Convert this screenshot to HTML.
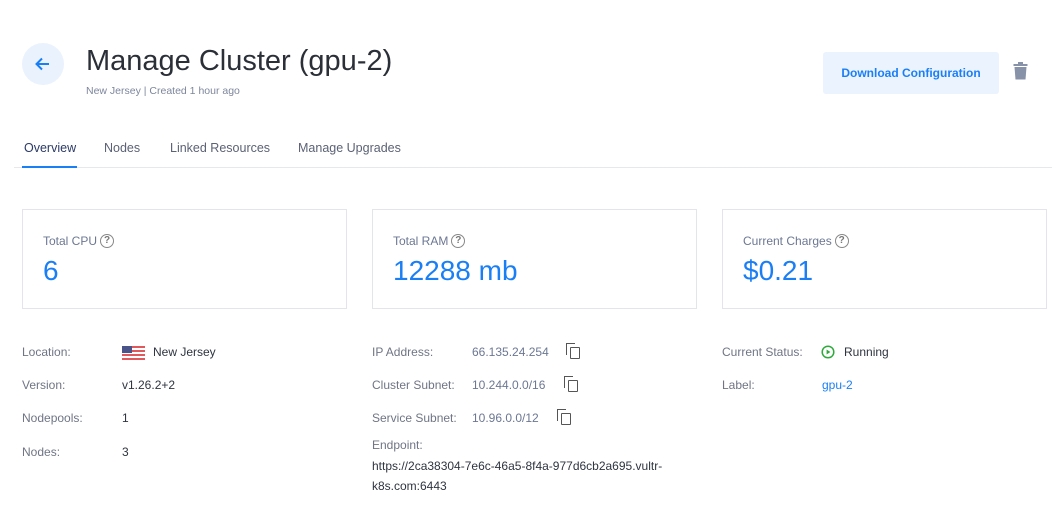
<!DOCTYPE html>
<html><head><style>
*{margin:0;padding:0;box-sizing:border-box}
body{width:1052px;height:523px;background:#fff;font-family:"Liberation Sans",sans-serif;position:relative;overflow:hidden;color:#2b2f38}
.a{position:absolute;white-space:nowrap}
.back{left:22px;top:43px;width:42px;height:42px;border-radius:50%;background:#eaf2fd}
.card{position:absolute;top:209px;width:325px;height:100px;border:1px solid #e3e5ea}
.cl{position:absolute;left:20px;top:24px;font-size:12px;color:#6c7793;display:flex;align-items:center}
.cv{position:absolute;left:20px;top:45px;font-size:28px;color:#1a7ff5}
.q{display:inline-block;width:14px;height:14px;border:1.4px solid #888;border-radius:50%;font-size:10px;line-height:11px;text-align:center;color:#777;margin-left:3px;font-weight:bold}
.lab{font-size:12px;color:#6f7585}
.val{font-size:12px;color:#2e3440}
.val2{font-size:12px;color:#6c7793}
.cp{position:absolute;width:10px;height:12px;border:1.8px solid #555;border-radius:1px}
.cp:before{content:"";position:absolute;left:-5px;top:-5px;width:8px;height:11px;border-left:1.8px solid #555;border-top:1.8px solid #555}
.tab{font-size:12.5px;color:#5b6275;top:141px}
</style></head><body>
<div class="a back"><svg width="42" height="42" viewBox="0 0 42 42"><path d="M27 21H15M20 15.5l-5.5 5.5 5.5 5.5" stroke="#1a7ff5" stroke-width="2" fill="none"/></svg></div>
<div class="a" style="left:86px;top:45px;font-size:29px;color:#2b2f38">Manage Cluster (gpu-2)</div>
<div class="a" style="left:86px;top:85px;font-size:10.5px;color:#7d869c">New Jersey | Created 1 hour ago</div>
<div class="a" style="left:823px;top:52px;width:176px;height:42px;background:#ebf3fe;border-radius:3px;color:#1a7ff5;font-size:12px;font-weight:bold;text-align:center;line-height:42px">Download Configuration</div>
<svg class="a" style="left:1013px;top:62px" width="15" height="18" viewBox="0 0 15 18"><rect x="0.5" y="2" width="14" height="2" fill="#8791a8"/><rect x="5" y="0" width="5" height="2" fill="#8791a8"/><path d="M1.5 5h12l-1 12.5h-10z" fill="#8791a8"/></svg>
<div class="a tab" style="left:24px;color:#2b3a66">Overview</div>
<div class="a tab" style="left:104px">Nodes</div>
<div class="a tab" style="left:170px">Linked Resources</div>
<div class="a tab" style="left:298px">Manage Upgrades</div>
<div class="a" style="left:14px;top:167px;width:1038px;height:1px;background:#e6e8ec"></div>
<div class="a" style="left:22px;top:166px;width:55px;height:2px;background:#1a7ff5"></div>
<div class="card" style="left:22px"><div class="cl">Total CPU <span class="q">?</span></div><div class="cv">6</div></div>
<div class="card" style="left:372px"><div class="cl">Total RAM <span class="q">?</span></div><div class="cv">12288 mb</div></div>
<div class="card" style="left:722px"><div class="cl">Current Charges <span class="q">?</span></div><div class="cv">$0.21</div></div>
<div class="a lab" style="left:22px;top:345px">Location:</div>
<svg class="a" style="left:122px;top:346px" width="23" height="14" viewBox="0 0 23 14"><rect width="23" height="14" fill="#fff"/><g fill="#e0585c"><rect y="0" width="23" height="2"/><rect y="4" width="23" height="2"/><rect y="8" width="23" height="2"/><rect y="12" width="23" height="2"/></g><rect width="10" height="7" fill="#4a5488"/></svg>
<div class="a val" style="left:153px;top:345px">New Jersey</div>
<div class="a lab" style="left:22px;top:378px">Version:</div><div class="a val" style="left:122px;top:378px">v1.26.2+2</div>
<div class="a lab" style="left:22px;top:411px">Nodepools:</div><div class="a val" style="left:122px;top:411px">1</div>
<div class="a lab" style="left:22px;top:445px">Nodes:</div><div class="a val" style="left:122px;top:445px">3</div>
<div class="a lab" style="left:372px;top:345px">IP Address:</div><div class="a val2" style="left:472px;top:345px">66.135.24.254</div><div class="cp" style="left:570px;top:347px"></div>
<div class="a lab" style="left:372px;top:378px">Cluster Subnet:</div><div class="a val2" style="left:472px;top:378px">10.244.0.0/16</div><div class="cp" style="left:568px;top:380px"></div>
<div class="a lab" style="left:372px;top:411px">Service Subnet:</div><div class="a val2" style="left:472px;top:411px">10.96.0.0/12</div><div class="cp" style="left:561px;top:413px"></div>
<div class="a lab" style="left:372px;top:438px">Endpoint:</div>
<div class="a val" style="left:372px;top:459px">https://2ca38304-7e6c-46a5-8f4a-977d6cb2a695.vultr-</div>
<div class="a val" style="left:372px;top:479px">k8s.com:6443</div>
<div class="a lab" style="left:722px;top:345px">Current Status:</div>
<svg class="a" style="left:821px;top:345px" width="14" height="14" viewBox="0 0 14 14"><circle cx="7" cy="7" r="5.8" stroke="#2eaa3c" stroke-width="1.5" fill="none"/><path d="M5.6 4.5v5l3.8-2.5z" fill="#2eaa3c"/></svg>
<div class="a val" style="left:844px;top:345px">Running</div>
<div class="a lab" style="left:722px;top:378px">Label:</div><div class="a" style="left:822px;top:378px;font-size:12px;color:#1a7ff5">gpu-2</div>
</body></html>
